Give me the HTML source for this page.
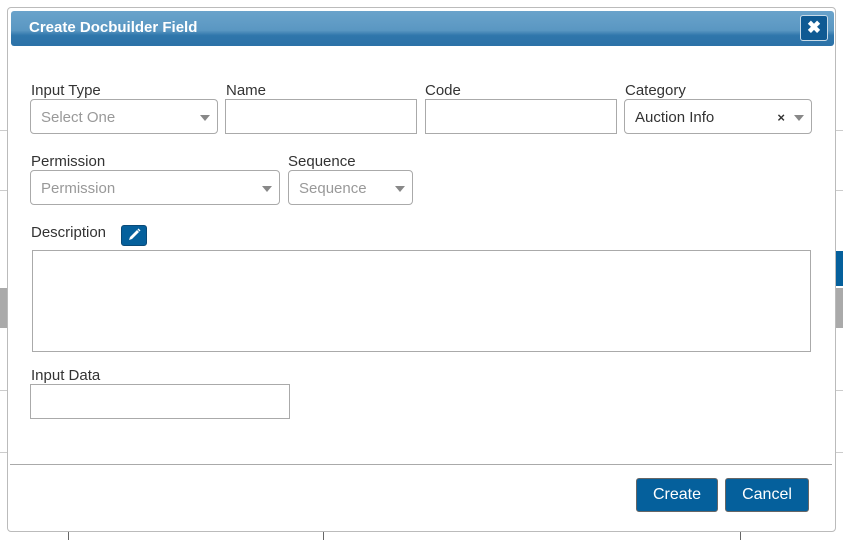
<!DOCTYPE html>
<html><head><meta charset="utf-8"><style>
*{box-sizing:border-box;margin:0;padding:0}
body{width:843px;height:540px;overflow:hidden;background:#fff;font-family:"Liberation Sans",sans-serif;position:relative;color:#333}
.bgl{position:absolute;background:#ccc}
.dlg{position:absolute;left:7px;top:7px;width:829px;height:525px;background:#fff;border:1px solid #bbb;border-radius:4px}
.tb{position:absolute;left:3px;top:3px;width:823px;height:35px;border-radius:3px;background:linear-gradient(#6aa3cb,#5a97c2 55%,#2f76ab 70%,#2c72a8);}
.tb span{position:absolute;left:18px;top:8px;color:#fff;font-weight:bold;font-size:15px}
.x{position:absolute;right:6px;top:4px;width:28px;height:26px;background:#0f5a93;border:1px solid #c9dbe8;border-radius:3px;color:#fff;font-weight:bold;text-align:center;line-height:24px;font-size:17px}
.lb{position:absolute;font-size:15px;color:#333}
.in{position:absolute;border:1px solid #aaa;height:35px;background:#fff}
.sel{border-radius:4px;font-size:15px;color:#999;padding:9px 10px}
.sel:after{content:"";position:absolute;right:7px;top:15px;border-left:5px solid transparent;border-right:5px solid transparent;border-top:6px solid #888}
.btn{position:absolute;top:478px;height:34px;background:#05609c;border:1px solid #666;border-radius:3px;color:#fff;font-size:16px;text-align:center;line-height:32px}
</style></head><body>
<div class="bgl" style="left:0;top:130px;width:843px;height:1px"></div>
<div class="bgl" style="left:0;top:190px;width:843px;height:1px"></div>
<div class="bgl" style="left:0;top:288px;width:843px;height:40px;background:#aaa"></div>
<div style="position:absolute;left:836px;top:251px;width:7px;height:35px;background:#05609c"></div>
<div class="bgl" style="left:0;top:390px;width:843px;height:1px"></div>
<div class="bgl" style="left:0;top:452px;width:843px;height:1px"></div>
<div class="bgl" style="left:68px;top:530px;width:1px;height:10px;background:#666"></div>
<div class="bgl" style="left:323px;top:530px;width:1px;height:10px;background:#666"></div>
<div class="bgl" style="left:740px;top:530px;width:1px;height:10px;background:#666"></div>
<div class="dlg">
<div class="tb"><span>Create Docbuilder Field</span><div class="x">✖</div></div>
</div>
<div class="lb" style="left:31px;top:82px">Input Type</div>
<div class="in sel" style="left:30px;top:99px;width:188px">Select One</div>
<div class="lb" style="left:226px;top:82px">Name</div>
<div class="in" style="left:225px;top:99px;width:192px"></div>
<div class="lb" style="left:425px;top:82px">Code</div>
<div class="in" style="left:425px;top:99px;width:192px"></div>
<div class="lb" style="left:625px;top:82px">Category</div>
<div class="in sel" style="left:624px;top:99px;width:188px;color:#333">Auction Info<span style="position:absolute;right:26px;top:10px;font-size:13px;color:#333;font-weight:bold">×</span></div>
<div class="lb" style="left:31px;top:153px">Permission</div>
<div class="in sel" style="left:30px;top:170px;width:250px">Permission</div>
<div class="lb" style="left:288px;top:153px">Sequence</div>
<div class="in sel" style="left:288px;top:170px;width:125px">Sequence</div>
<div class="lb" style="left:31px;top:224px">Description</div>
<div style="position:absolute;left:121px;top:225px;width:26px;height:21px;background:#05609c;border-radius:3px;border:1px solid #0a4a78">
<svg width="24" height="19" viewBox="0 0 24 19"><path d="M7 14l1-3 7-7 2 2-7 7z M15.5 3.5l1-1 2 2-1 1z" fill="#fff"/></svg></div>
<div class="in" style="left:32px;top:250px;width:779px;height:102px"></div>
<div class="lb" style="left:31px;top:367px">Input Data</div>
<div class="in" style="left:30px;top:384px;width:260px;height:35px"></div>
<div style="position:absolute;left:10px;top:464px;width:822px;height:1px;background:#aaa"></div>
<div class="btn" style="left:636px;width:82px">Create</div>
<div class="btn" style="left:725px;width:84px">Cancel</div>
</body></html>
